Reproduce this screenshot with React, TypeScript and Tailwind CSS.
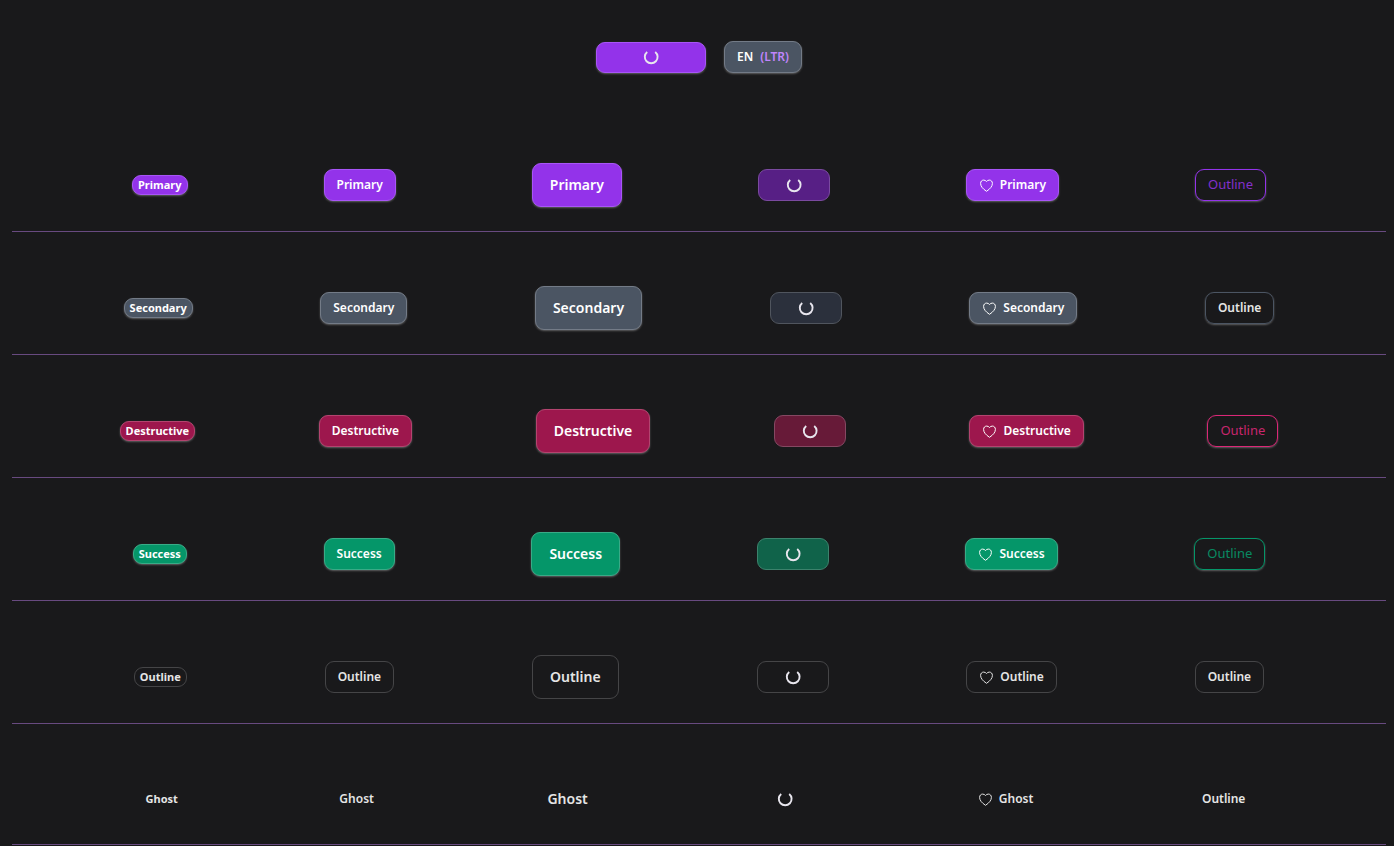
import clsx from 'clsx'
import type { ReactNode } from 'react'

type Variant = 'primary' | 'secondary' | 'destructive' | 'success' | 'outline' | 'ghost'
type Size = 'sm' | 'md' | 'lg'

const glow = 'shadow-[0_1px_2px_rgba(255,255,255,0.3)]'

const solid: Record<Variant, string> = {
   primary: `border border-[#a855f7] bg-[#9333ea] text-white ${glow}`,
   secondary: `border border-[#737b87] bg-[#4b5563] text-white ${glow}`,
   destructive: `border border-[#b3446f] bg-[#9d174d] text-white ${glow}`,
   success: `border border-[#39ab87] bg-[#059669] text-white ${glow}`,
   outline: 'border border-[#454547] text-[#e5e5e5]',
   ghost: 'text-[#e5e5e5]',
}

const disabled: Record<Variant, string> = {
   primary: 'border border-[#7a4a9f] bg-[#571f85]',
   secondary: 'border border-[#50555e] bg-[#2b303c]',
   destructive: 'border border-[#854862] bg-[#671a38]',
   success: 'border border-[#3c826c] bg-[#10634a]',
   outline: 'border border-[#454547]',
   ghost: '',
}

const outlined: Record<Variant, string> = {
   primary: `border border-[#9333ea] text-[13px] font-normal text-[#8330cc] ${glow}`,
   secondary: `border border-[#4b5563] text-xs font-semibold text-[#e5e5e5] ${glow}`,
   destructive: `border border-[#db2777] text-[13px] font-normal text-[#c8266e] ${glow}`,
   success: `border border-[#059669] text-[13px] font-normal text-[#088a62] ${glow}`,
   outline: 'border border-[#454547] text-xs font-semibold text-[#e5e5e5]',
   ghost: 'text-xs font-semibold text-[#e5e5e5]',
}

const sizes: Record<Size, string> = {
   sm: 'h-5 px-[5px] text-[11px] font-bold',
   md: 'h-8 px-3 text-xs font-semibold',
   lg: 'px-[17px] py-[11px] text-sm leading-5 font-semibold',
}

const Spinner = () => (
   <svg viewBox="0 0 16 16" className="size-4" fill="none" aria-hidden="true">
      <path
         d="M4.2 2.9A6.4 6.4 0 1 0 12.2 2.9"
         stroke="#e8e6ee"
         strokeWidth="1.9"
      />
   </svg>
)

const Heart = () => (
   <svg viewBox="0 0 15 15" className="size-[15px]" fill="none" aria-hidden="true">
      <path
         d="M7.5 13.3C3.9 10.9 1.6 8.4 1.6 5.4C1.6 3.4 2.9 2.1 4.6 2.1C5.8 2.1 6.8 2.6 7.5 3.5C8.2 2.6 9.2 2.1 10.4 2.1C12.1 2.1 13.4 3.4 13.4 5.4C13.4 8.4 11.1 10.9 7.5 13.3Z"
         stroke="currentColor"
         strokeLinejoin="round"
      />
   </svg>
)

type ButtonProps = {
   className: string
   children: ReactNode
   loading?: boolean
}

const Button = ({ className, children, loading }: ButtonProps) => (
   <button
      type="button"
      disabled={loading}
      aria-label={loading ? 'Loading' : undefined}
      className={clsx(
         'flex items-center justify-center rounded-[9px] whitespace-nowrap',
         className
      )}
   >
      {children}
   </button>
)

const rows: { variant: Variant; label: string }[] = [
   { variant: 'primary', label: 'Primary' },
   { variant: 'secondary', label: 'Secondary' },
   { variant: 'destructive', label: 'Destructive' },
   { variant: 'success', label: 'Success' },
   { variant: 'outline', label: 'Outline' },
   { variant: 'ghost', label: 'Ghost' },
]

const ButtonRow = ({ variant, label }: { variant: Variant; label: string }) => (
   <div className="flex items-center justify-evenly gap-4 border-b border-[#684a80] py-6">
      <Button className={clsx(sizes.sm, solid[variant])}>{label}</Button>
      <Button className={clsx(sizes.md, solid[variant])}>{label}</Button>
      <Button className={clsx(sizes.lg, solid[variant])}>{label}</Button>
      <Button loading className={clsx('h-8 w-[72px]', disabled[variant])}>
         <Spinner />
      </Button>
      <Button className={clsx('gap-1.5', sizes.md, solid[variant])}>
         <Heart />
         {label}
      </Button>
      <Button className={clsx('h-8 px-3', outlined[variant])}>Outline</Button>
   </div>
)

const App = () => {
   return (
      <main className="min-h-screen bg-[#19191b] pr-2 pl-3 font-['Noto_Sans','Open_Sans',sans-serif]">
         <div className="flex items-center justify-center gap-[18px] pt-[41px] pb-9">
            <Button loading className={clsx('h-[31px] w-[110px]', solid.primary)}>
               <Spinner />
            </Button>
            <Button className={clsx('gap-[7px]', sizes.md, solid.secondary)}>
               EN <span className="text-[#c084fc]">(LTR)</span>
            </Button>
         </div>
         <div className="flex flex-col gap-[30px] pt-[30px]">
            {rows.map((row) => (
               <ButtonRow key={row.variant} {...row} />
            ))}
         </div>
      </main>
   )
}

export default App
